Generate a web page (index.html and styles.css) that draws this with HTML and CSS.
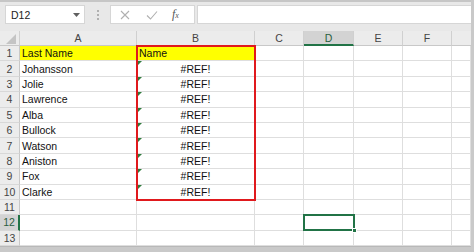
FILE: index.html
```html
<!DOCTYPE html>
<html>
<head>
<meta charset="utf-8">
<link rel="stylesheet" href="styles.css">
</head>
<body>
<div class="app">
  <div class="toolbar">
    <div class="namebox">
      <span class="nb-text">D12</span>
      <svg class="nb-arrow" width="7" height="4" viewBox="0 0 7 4"><polygon points="0,0 7,0 3.5,4" fill="#606060"/></svg>
    </div>
    <div class="dots"><i></i><i></i><i></i></div>
    <div class="fxbox">
      <svg width="10" height="10" viewBox="0 0 10 10"><path d="M1 1 L9 9 M9 1 L1 9" stroke="#b0b0b0" stroke-width="1.1" fill="none"/></svg>
      <svg width="12" height="10" viewBox="0 0 12 10"><path d="M1 5.5 L4.5 9 L11 1.5" stroke="#b0b0b0" stroke-width="1.1" fill="none"/></svg>
      <span class="fx">f<span class="fx-x">x</span></span>
    </div>
    <div class="formula"></div>
  </div>
  <div class="sheet">
    <div class="grid">
      <div class="ch corner"><svg width="10" height="10" viewBox="0 0 10 10"><polygon points="10,0 10,10 0,10" fill="#c4c4c4"/></svg></div>
      <div class="ch">A</div><div class="ch">B</div><div class="ch">C</div><div class="ch sel">D</div><div class="ch">E</div><div class="ch">F</div><div class="ch last"></div>

      <div class="rh">1</div><div class="c yel">Last Name</div><div class="c yel">Name</div><div class="c"></div><div class="c"></div><div class="c"></div><div class="c"></div><div class="c"></div>
      <div class="rh">2</div><div class="c">Johansson</div><div class="c ref">#REF!</div><div class="c"></div><div class="c"></div><div class="c"></div><div class="c"></div><div class="c"></div>
      <div class="rh">3</div><div class="c">Jolie</div><div class="c ref">#REF!</div><div class="c"></div><div class="c"></div><div class="c"></div><div class="c"></div><div class="c"></div>
      <div class="rh">4</div><div class="c">Lawrence</div><div class="c ref">#REF!</div><div class="c"></div><div class="c"></div><div class="c"></div><div class="c"></div><div class="c"></div>
      <div class="rh">5</div><div class="c">Alba</div><div class="c ref">#REF!</div><div class="c"></div><div class="c"></div><div class="c"></div><div class="c"></div><div class="c"></div>
      <div class="rh">6</div><div class="c">Bullock</div><div class="c ref">#REF!</div><div class="c"></div><div class="c"></div><div class="c"></div><div class="c"></div><div class="c"></div>
      <div class="rh">7</div><div class="c">Watson</div><div class="c ref">#REF!</div><div class="c"></div><div class="c"></div><div class="c"></div><div class="c"></div><div class="c"></div>
      <div class="rh">8</div><div class="c">Aniston</div><div class="c ref">#REF!</div><div class="c"></div><div class="c"></div><div class="c"></div><div class="c"></div><div class="c"></div>
      <div class="rh">9</div><div class="c">Fox</div><div class="c ref">#REF!</div><div class="c"></div><div class="c"></div><div class="c"></div><div class="c"></div><div class="c"></div>
      <div class="rh">10</div><div class="c">Clarke</div><div class="c ref">#REF!</div><div class="c"></div><div class="c"></div><div class="c"></div><div class="c"></div><div class="c"></div>
      <div class="rh">11</div><div class="c"></div><div class="c"></div><div class="c"></div><div class="c"></div><div class="c"></div><div class="c"></div><div class="c"></div>
      <div class="rh sel">12</div><div class="c"></div><div class="c"></div><div class="c"></div><div class="c"></div><div class="c"></div><div class="c"></div><div class="c"></div>
      <div class="rh">13</div><div class="c"></div><div class="c"></div><div class="c"></div><div class="c"></div><div class="c"></div><div class="c"></div><div class="c"></div>
    </div>
    <div class="redbox"></div>
    <div class="selbox"><span class="handle"></span></div>
  </div>
  <div class="bottom"></div>
</div>
</body>
</html>
```
FILE: styles.css
```css
* { box-sizing: border-box; }
html, body { margin: 0; padding: 0; }
body {
  width: 474px;
  height: 252px;
  overflow: hidden;
  background: #ffffff;
  font-family: "Liberation Sans", Arial, sans-serif;
}
.app {
  width: 474px;
  height: 252px;
  display: flex;
  flex-direction: column;
  border-right: 3px solid #c9c9c9;
}
.toolbar {
  height: 31px;
  flex: none;
  background: #e8e8e8;
  border-top: 2px solid #c6c6c6;
  display: flex;
  align-items: flex-start;
  padding-top: 3px;
  padding-left: 5px;
}
.namebox {
  width: 80px;
  height: 19px;
  background: #fff;
  border: 1px solid #d6d6d6;
  display: flex;
  align-items: center;
  justify-content: space-between;
  padding: 0 4px 0 5px;
  font-size: 10.5px;
  color: #222;
}
.nb-arrow { margin-top: 1px; }
.dots {
  width: 25px;
  height: 19px;
  display: flex;
  flex-direction: column;
  align-items: center;
  justify-content: center;
  gap: 2px;
}
.dots i {
  display: block;
  width: 2px;
  height: 2px;
  background: #b0b0b0;
}
.fxbox {
  width: 85px;
  height: 19px;
  background: #fff;
  border: 1px solid #d6d6d6;
  display: flex;
  align-items: center;
  padding-left: 9px;
  gap: 16px;
}
.fx {
  font-family: "Liberation Serif", serif;
  font-style: italic;
  font-size: 12px;
  color: #555;
  margin-left: -2px;
}
.fx-x { font-size: 8px; }
.formula {
  flex: 1;
  height: 19px;
  margin-left: 2px;
  background: #fff;
  border: 1px solid #d6d6d6;
  border-right: none;
}
.sheet {
  position: relative;
  flex: none;
  height: 215px;
  overflow: hidden;
}
.grid {
  display: grid;
  grid-template-columns: 20px 117px 118px 49px 50px 49px 49px 19px;
  grid-template-rows: 15px repeat(13, 15.4px);
}
.ch {
  background: #ececec;
  border-right: 1px solid #d0d0d0;
  border-bottom: 1px solid #c8c8c8;
  font-size: 10.5px;
  color: #444;
  display: flex;
  align-items: center;
  justify-content: center;
}
.ch.corner {
  align-items: flex-end;
  justify-content: flex-end;
  padding: 0 3px 1px 0;
}
.ch.last { border-right: none; }
.ch.sel {
  background: #d3d3d3;
  color: #2a5e3e;
  border-bottom: 2px solid #217346;
}
.rh {
  background: #ececec;
  border-right: 1px solid #c8c8c8;
  border-bottom: 1px solid #d8d8d8;
  font-size: 10.5px;
  color: #444;
  display: flex;
  align-items: center;
  justify-content: center;
}
.rh.sel {
  background: #d3d3d3;
  color: #2a5e3e;
  border-right: 2px solid #217346;
}
.c {
  border-right: 1px solid #dedede;
  border-bottom: 1px solid #dedede;
  font-size: 10.5px;
  color: #111;
  display: flex;
  align-items: center;
  padding-left: 2px;
  white-space: nowrap;
  overflow: hidden;
}
.c.yel { background: #ffff00; }
.c.ref {
  justify-content: center;
  padding-left: 0;
  position: relative;
}
.c.ref::before {
  content: "";
  position: absolute;
  left: 1px;
  top: 0;
  border-top: 4px solid #2f7a3c;
  border-right: 4px solid transparent;
}
.redbox {
  position: absolute;
  left: 136px;
  top: 14px;
  width: 120px;
  height: 156px;
  border: 2px solid #e0191d;
}
.selbox {
  position: absolute;
  left: 303px;
  top: 183px;
  width: 52px;
  height: 17px;
  border: 2px solid #217346;
}
.handle {
  position: absolute;
  right: -4px;
  bottom: -4px;
  width: 5px;
  height: 5px;
  background: #217346;
  border: 1px solid #fff;
}
.bottom {
  flex: 1;
  background: #c9c9c9;
  border-top: 1px solid #b8b8b8;
}
```
